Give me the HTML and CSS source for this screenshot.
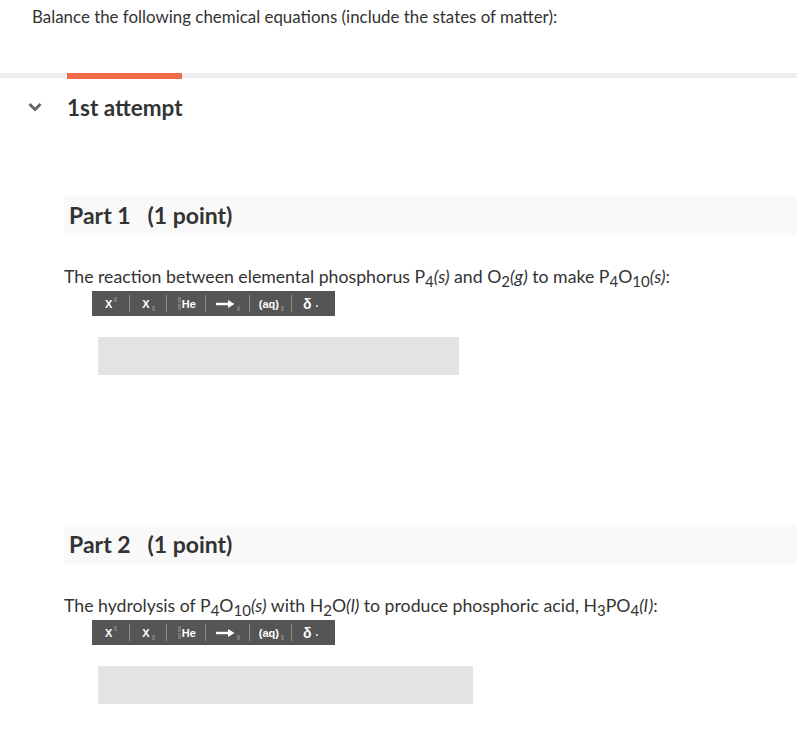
FILE: index.html
```html
<!DOCTYPE html>
<html>
<head>
<meta charset="utf-8">
<link rel="stylesheet" href="styles.css">
</head>
<body>
<div class="intro">Balance the following chemical equations (include the states of matter):</div>

<div class="tabs"><div class="tab-active"></div></div>

<div class="attempt-head">
  <svg class="chev" width="14" height="10" viewBox="0 0 14 10"><path d="M1.5 2 L7 7.5 L12.5 2" fill="none" stroke="#666" stroke-width="3"/></svg>
  <span class="attempt-title">1st attempt</span>
</div>

<section class="part part1">
  <div class="part-head">Part 1&nbsp;&nbsp; (1 point)</div>
  <p class="prompt">The reaction between elemental phosphorus P<sub>4</sub><i>(s)</i> and O<sub>2</sub><i>(g)</i> to make P<sub>4</sub>O<sub>10</sub><i>(s)</i>:</p>
  <div class="toolbar">
    <span class="tb t1">X<span class="box sup"></span></span>
    <span class="tb t2">X<span class="box sub"></span></span>
    <span class="tb t3"><span class="stack"><span class="box"></span><span class="box"></span></span>He</span>
    <span class="tb t4"><svg class="arrow" width="19" height="10" viewBox="0 0 19 10"><path d="M0 5 H14" stroke="#fff" stroke-width="2.4"/><path d="M12 1 L18.5 5 L12 9 Z" fill="#fff"/></svg><span class="box sub"></span></span>
    <span class="tb t5">(aq)<span class="box sub"></span></span>
    <span class="tb t6">&delta;<span class="dot"></span></span>
  </div>
  <div class="answer a1"></div>
</section>

<section class="part part2">
  <div class="part-head">Part 2&nbsp;&nbsp; (1 point)</div>
  <p class="prompt">The hydrolysis of P<sub>4</sub>O<sub>10</sub><i>(s)</i> with H<sub>2</sub>O<i>(l)</i> to produce phosphoric acid, H<sub>3</sub>PO<sub>4</sub><i>(l&#8202;)</i>:</p>
  <div class="toolbar">
    <span class="tb t1">X<span class="box sup"></span></span>
    <span class="tb t2">X<span class="box sub"></span></span>
    <span class="tb t3"><span class="stack"><span class="box"></span><span class="box"></span></span>He</span>
    <span class="tb t4"><svg class="arrow" width="19" height="10" viewBox="0 0 19 10"><path d="M0 5 H14" stroke="#fff" stroke-width="2.4"/><path d="M12 1 L18.5 5 L12 9 Z" fill="#fff"/></svg><span class="box sub"></span></span>
    <span class="tb t5">(aq)<span class="box sub"></span></span>
    <span class="tb t6">&delta;<span class="dot"></span></span>
  </div>
  <div class="answer a2"></div>
</section>
</body>
</html>
```

FILE: styles.css
```css
html, body {
  margin: 0;
  padding: 0;
  background: #fff;
  font-family: Lato, "Noto Sans", sans-serif;
  color: #333;
}
.intro {
  font-size: 16.9px;
  padding: 7px 0 0 32px;
  line-height: 20px;
  height: 66px;
}
.tabs {
  height: 5px;
  background: #eee;
  position: relative;
}
.tab-active {
  position: absolute;
  left: 67px;
  top: 0;
  width: 115px;
  height: 6px;
  background: #ee6a48;
}
.attempt-head {
  display: flex;
  align-items: center;
  margin-top: 15px;
  height: 28px;
}
.chev {
  margin-left: 28px;
  margin-right: 25px;
}
.attempt-title {
  font-size: 22.5px;
  font-weight: bold;
  color: #333;
}
.part {
  margin-left: 64px;
}
.part1 { margin-top: 75px; }
.part2 { margin-top: 0; }
.part-head {
  background: #f9f9f9;
  height: 39px;
  line-height: 39px;
  padding-left: 5px;
  font-size: 23px;
  font-weight: bold;
  color: #333;
}
.prompt {
  margin: 32px 0 0 0;
  font-size: 17.7px;
  line-height: 20px;
  color: #333;
}
.prompt sub {
  font-size: 15px;
  vertical-align: -4px;
  line-height: 0;
}
.toolbar {
  display: flex;
  align-items: center;
  margin-left: 28px;
  width: 243px;
  height: 25px;
  background: #555;
  margin-top: 4px;
  color: #fff;
  font-family: "Liberation Sans", Arial, sans-serif;
  font-weight: bold;
  font-size: 11px;
}
.tb {
  display: flex;
  align-items: center;
  height: 17px;
  border-left: 1px solid #8a8a8a;
}
.t1 { border-left: none; padding: 0 12px 0 13px; }
.t2 { padding: 0 11px 0 12px; }
.t3 { padding: 0 9px 0 11px; }
.t4 { padding: 0 9px 0 10px; }
.t5 { padding: 0 7px 0 9px; }
.t6 { padding: 0 0 0 11px; font-size: 14px; }
.box {
  display: inline-block;
  width: 3px;
  height: 5px;
  background: #777;
  margin-left: 2px;
}
.box.sup { align-self: flex-start; margin-top: 2px; }
.box.sub { align-self: flex-end; margin-bottom: 1px; }
.stack {
  display: flex;
  flex-direction: column;
  gap: 1px;
  margin-right: 1px;
}
.stack .box { margin-left: 0; height: 6px; }
.arrow { display: block; }
.dot {
  width: 2px;
  height: 2px;
  background: #ccc;
  margin-left: 5px;
  align-self: flex-end;
  margin-bottom: 5px;
}
.answer {
  margin-left: 34px;
  height: 38px;
  background: #e3e3e3;
  margin-top: 21px;
}
.a1 { width: 361px; margin-bottom: 150px; }
.a2 { width: 375px; }
```
